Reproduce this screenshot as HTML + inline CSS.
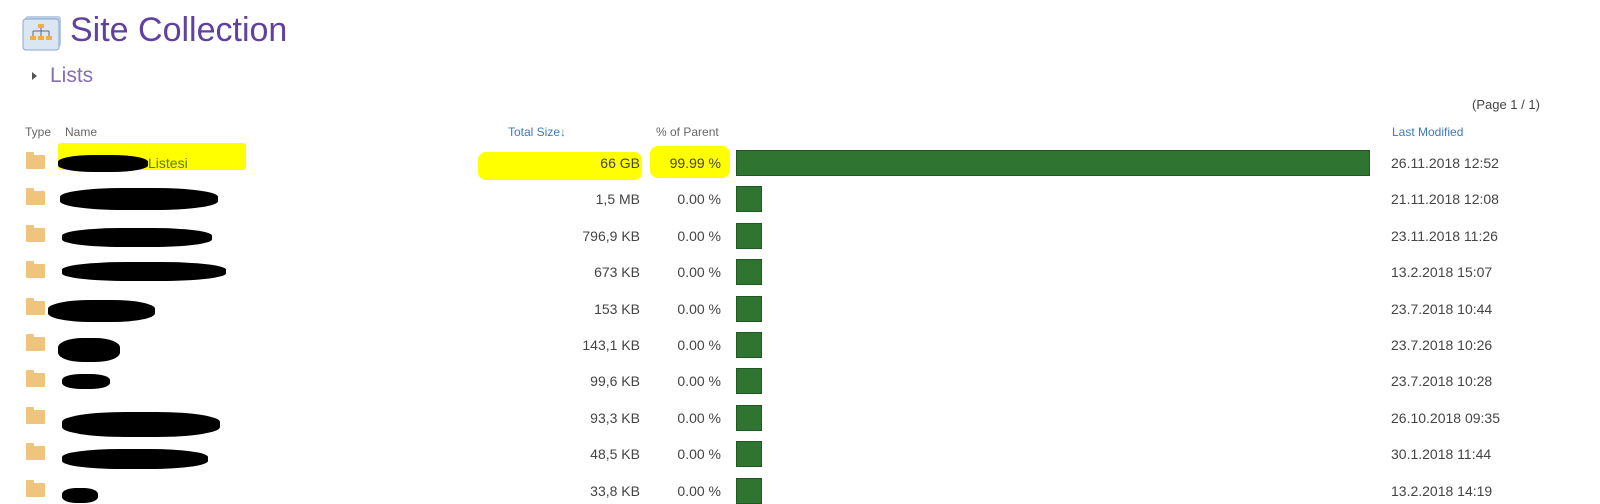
<!DOCTYPE html><html><head><style>
body{margin:0;width:1600px;height:503px;background:#fff;position:relative;overflow:hidden;font-family:"Segoe UI","Liberation Sans",sans-serif;}
.a{position:absolute;white-space:nowrap}
.h{font-size:12px;color:#666}
.l{color:#3c7ac0}
.t{font-size:14px;color:#444;line-height:18px}
.r{text-align:right}
.f{position:absolute;left:26px;width:19px;height:14px;background:#efc57e;border-radius:1px}
.f:before{content:"";position:absolute;left:0;top:-3px;width:8px;height:4px;background:#efc57e;border-radius:1px 1px 0 0}
.b{position:absolute;left:736px;height:24px;background:#2f7430;border:1px solid #1e5a1f}
.k{position:absolute;background:#000;border-radius:40%}
.y{position:absolute;background:#ffff00}
</style></head><body>
<svg class="a" style="left:22px;top:15px" width="42" height="36" viewBox="0 0 42 36"><rect x="3" y="1" width="36" height="31" rx="3" fill="#b9cde6"/><rect x="1" y="4" width="36" height="31" rx="3" fill="#dbe6f3" stroke="#8aa7cc"/><path d="M19 12v4M11 16h16M11 16v5M19 16v5M27 16v5" stroke="#667" fill="none"/><rect x="16" y="9" width="6" height="4" fill="#f0b040"/><rect x="8" y="21" width="6" height="4" fill="#f0b040"/><rect x="16" y="21" width="6" height="4" fill="#f0b040"/><rect x="24" y="21" width="6" height="4" fill="#f0b040"/></svg>
<div class="a" style="left:70px;top:11px;font-size:34px;color:#6040a0;font-weight:300">Site Collection</div>
<div class="a" style="left:32px;top:72px;width:0;height:0;border-left:5px solid #555;border-top:4px solid transparent;border-bottom:4px solid transparent"></div>
<div class="a" style="left:50px;top:64px;font-size:21px;color:#8570ad">Lists</div>
<div class="a t" style="left:1472px;top:96px;font-size:13px">(Page 1 / 1)</div>
<div class="a h" style="left:25px;top:125px">Type</div>
<div class="a h" style="left:65px;top:125px">Name</div>
<div class="a h l" style="left:508px;top:125px">Total Size&#8595;</div>
<div class="a h" style="left:656px;top:125px">% of Parent</div>
<div class="a h l" style="left:1392px;top:125px">Last Modified</div>
<div class="y" style="left:58px;top:143px;width:188px;height:27px;border-radius:3px"></div>
<div class="y" style="left:478px;top:152px;width:164px;height:28px;border-radius:8px"></div>
<div class="y" style="left:650px;top:146px;width:80px;height:32px;border-radius:8px"></div>
<div class="a t" style="left:148px;top:154px;color:#5a7a20">Listesi</div>
<div id="rows"></div>
<script>
var d=[["66 GB","99.99 %","26.11.2018 12:52",632],["1,5 MB","0.00 %","21.11.2018 12:08",24],["796,9 KB","0.00 %","23.11.2018 11:26",24],["673 KB","0.00 %","13.2.2018 15:07",24],["153 KB","0.00 %","23.7.2018 10:44",24],["143,1 KB","0.00 %","23.7.2018 10:26",24],["99,6 KB","0.00 %","23.7.2018 10:28",24],["93,3 KB","0.00 %","26.10.2018 09:35",24],["48,5 KB","0.00 %","30.1.2018 11:44",24],["33,8 KB","0.00 %","13.2.2018 14:19",24]];
var k=[[58,155,90,17],[60,188,158,22],[62,228,150,19],[62,262,164,19],[48,300,107,22],[58,338,62,24],[62,374,48,15],[62,412,158,25],[62,449,146,20],[62,488,36,15]];
var h="";
d.forEach(function(r,i){var y=162+i*36.4;
h+='<div class="f" style="top:'+(y-7)+'px"></div>';
h+='<div class="a t r" style="left:500px;width:140px;top:'+(y-8)+'px">'+r[0]+'</div>';
h+='<div class="a t r" style="left:640px;width:81px;top:'+(y-8)+'px">'+r[1]+'</div>';
h+='<div class="b" style="top:'+(y-12)+'px;width:'+r[3]+'px"></div>';
h+='<div class="a t" style="left:1391px;top:'+(y-8)+'px">'+r[2]+'</div>';
var q=k[i];h+='<div class="k" style="left:'+q[0]+'px;top:'+q[1]+'px;width:'+q[2]+'px;height:'+q[3]+'px"></div>';});
document.getElementById("rows").innerHTML=h;
</script>
</body></html>
